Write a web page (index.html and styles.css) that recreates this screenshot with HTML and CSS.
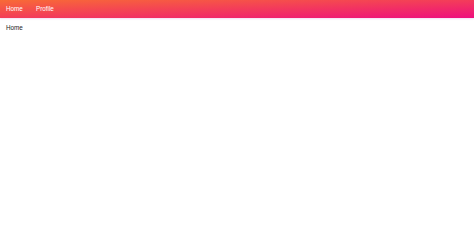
FILE: index.html
```html
<!DOCTYPE html>
<html lang="en">
<head>
<meta charset="utf-8">
<title>Home</title>
<link rel="stylesheet" href="styles.css">
</head>
<body>
<header class="topbar">
  <nav class="nav">
    <a class="nav-link" href="#">Home</a>
    <a class="nav-link" href="#">Profile</a>
  </nav>
</header>
<main class="content">
  <p class="page-title">Home</p>
</main>
</body>
</html>
```
FILE: styles.css
```css
html, body {
  margin: 0;
  padding: 0;
  background: #ffffff;
  font-family: "Liberation Sans", Arial, sans-serif;
  font-size: 6.3px;
}

.topbar {
  box-sizing: border-box;
  height: 18px;
  padding-bottom: 1.5px;
  background: linear-gradient(to bottom right, #f86a36, #ee0e7e);
  box-shadow: 0 1px 1.5px rgba(190, 60, 200, 0.18);
  display: flex;
  align-items: center;
}

.nav {
  display: flex;
  gap: 13.2px;
  padding: 0 6px;
}

.nav-link {
  color: #ffffff;
  text-decoration: none;
}

.content {
  padding: 6.4px 6px;
}

.page-title {
  margin: 0;
  color: #222222;
}
```
